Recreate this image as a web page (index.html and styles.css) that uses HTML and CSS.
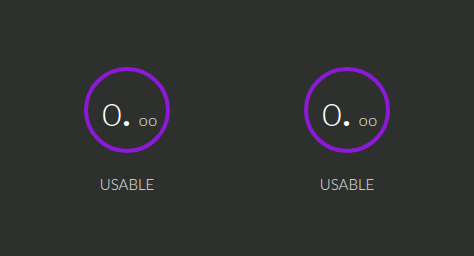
FILE: index.html
```html
<!DOCTYPE html>
<html>
<head>
<meta charset="utf-8">
<link rel="stylesheet" href="styles.css">
</head>
<body>
<div class="row">
  <div class="gauge">
    <div class="ring"><span class="big">0</span><span class="dot">.</span><span class="small">00</span></div>
    <div class="label">USABLE</div>
  </div>
  <div class="gauge">
    <div class="ring"><span class="big">0</span><span class="dot">.</span><span class="small">00</span></div>
    <div class="label">USABLE</div>
  </div>
</div>
</body>
</html>
```
FILE: styles.css
```css
html, body {
  margin: 0;
  padding: 0;
  background: #2d302c;
  width: 474px;
  height: 256px;
  overflow: hidden;
  font-family: Lato, "Open Sans", sans-serif;
  color: #ffffff;
}
.row {
  display: flex;
  justify-content: center;
  gap: 134px;
  padding-top: 67px;
}
.gauge {
  display: flex;
  flex-direction: column;
  align-items: center;
}
.ring {
  box-sizing: border-box;
  width: 86px;
  height: 86px;
  padding-left: 4px;
  border: 4px solid #8a1ad6;
  border-radius: 50%;
  display: flex;
  align-items: baseline;
  justify-content: center;
  line-height: 1;
}
.big {
  font-weight: 300;
  font-size: 31px;
  margin-top: 28px;
  transform: scaleX(1.1);
}
.dot {
  font-weight: 900;
  font-size: 31px;
  margin-left: 2px;
}
.small {
  font-weight: 300;
  font-size: 12px;
  margin-left: 9px;
  letter-spacing: 1px;
  display: inline-block;
  transform: scaleX(1.2);
  transform-origin: left;
}
.label {
  margin-top: 22px;
  font-size: 15px;
  font-weight: 300;
  color: #e2e2e2;
}
```
